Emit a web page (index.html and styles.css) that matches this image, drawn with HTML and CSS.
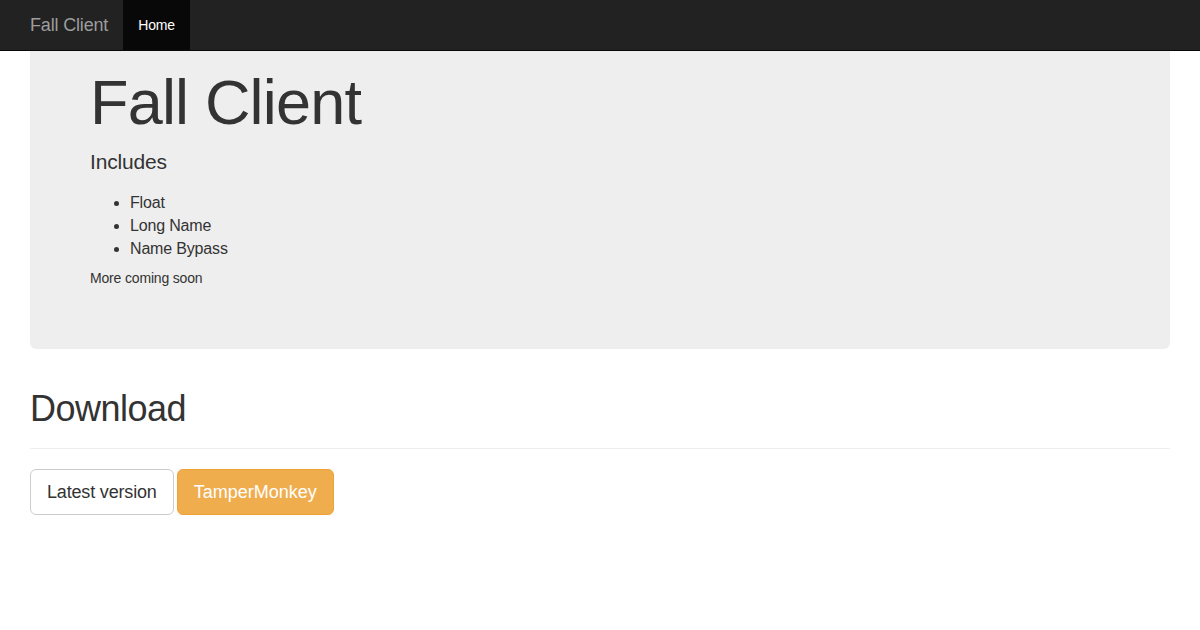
FILE: index.html
```html
<!DOCTYPE html>
<html lang="en">
<head>
<meta charset="utf-8">
<title>Fall Client</title>
<link rel="stylesheet" href="styles.css">
</head>
<body>
<nav class="navbar">
  <div class="container navbar-inner">
    <a class="navbar-brand" href="#">Fall Client</a>
    <ul class="navbar-nav">
      <li class="active"><a href="#">Home</a></li>
    </ul>
  </div>
</nav>
<div class="container">
  <div class="jumbotron">
    <h1 class="jumbo-title">Fall Client</h1>
    <p class="lead">Includes</p>
    <ul class="features">
      <li>Float</li>
      <li>Long Name</li>
      <li>Name Bypass</li>
    </ul>
    <p class="note">More coming soon</p>
  </div>
  <div class="page-header">
    <h1 class="section-title">Download</h1>
  </div>
  <div class="btn-row">
    <a class="btn btn-default" href="#">Latest version</a>
    <a class="btn btn-warning" href="#">TamperMonkey</a>
  </div>
</div>
</body>
</html>
```

FILE: styles.css
```css
* { box-sizing: border-box; }
html, body { margin: 0; padding: 0; }
body {
  font-family: "Liberation Sans", Helvetica, Arial, sans-serif;
  font-size: 14px;
  line-height: 1.42857143;
  letter-spacing: -0.012em;
  color: #333;
  background: #fff;
}
a { text-decoration: none; }

.container {
  width: 1170px;
  margin: 0 auto;
  padding: 0 15px;
}

.navbar {
  position: fixed;
  top: 0;
  left: 0;
  right: 0;
  z-index: 10;
  min-height: 50px;
  background: #222;
  border-bottom: 1px solid #080808;
}
.navbar-inner {
  display: flex;
  align-items: stretch;
}
.navbar-brand {
  margin-left: -15px;
  padding: 15px;
  height: 50px;
  font-size: 18px;
  line-height: 20px;
  color: #9d9d9d;
}
.navbar-nav {
  display: flex;
  list-style: none;
  margin: 0;
  padding: 0;
}
.navbar-nav a {
  display: block;
  padding: 15px;
  line-height: 20px;
  color: #9d9d9d;
}
.navbar-nav .active a {
  color: #fff;
  background: #080808;
}

.jumbotron {
  padding: 48px 60px;
  margin-bottom: 30px;
  background: #eee;
  border-radius: 6px;
}
.jumbo-title {
  margin: 20px 0 10px;
  font-size: 63px;
  font-weight: 500;
  line-height: 1.1;
  letter-spacing: -0.013em;
}
.lead {
  margin: 0 0 15px;
  font-size: 21px;
  font-weight: 200;
}
.features {
  margin: 0 0 7px;
  padding-left: 40px;
  font-size: 16px;
}
.note {
  margin: 0 0 13px;
}

.page-header {
  margin: 40px 0 20px;
  padding-bottom: 9px;
  border-bottom: 1px solid #eee;
}
.section-title {
  margin: 0 0 11px;
  font-size: 36px;
  font-weight: 500;
  line-height: 1.1;
  letter-spacing: -0.014em;
}

.btn-row {
  display: flex;
  gap: 3px;
}
.btn {
  display: inline-block;
  padding: 10px 16px;
  font-size: 18px;
  line-height: 1.3333333;
  border: 1px solid transparent;
  border-radius: 6px;
}
.btn-default {
  color: #333;
  background: #fff;
  border-color: #ccc;
}
.btn-warning {
  color: #fff;
  background: #f0ad4e;
  border-color: #eea236;
  letter-spacing: 0;
}
```
